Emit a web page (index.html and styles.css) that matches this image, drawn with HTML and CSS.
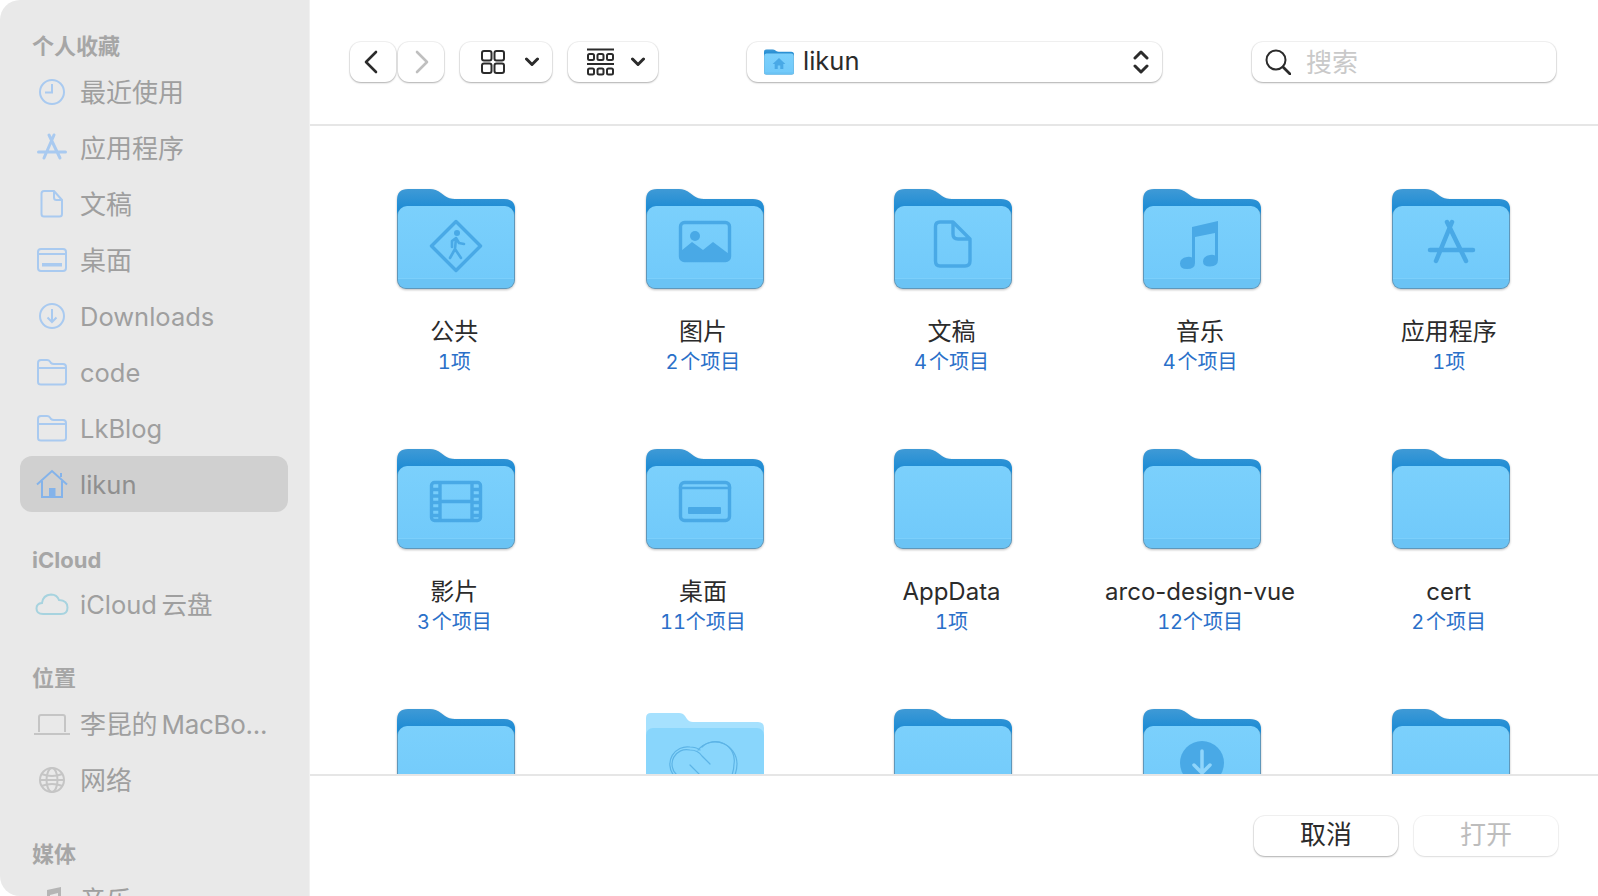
FILE: index.html
```html
<!DOCTYPE html>
<html lang="zh-CN">
<head>
  <meta charset="UTF-8">
  <title>打开</title>
  <link rel="stylesheet" href="styles.css">
</head>
<body>
  <!-- shared folder art -->
  <svg class="defs" aria-hidden="true">
    <defs>
      <linearGradient id="backGrad" x1="0" y1="0" x2="0" y2="1">
        <stop offset="0" stop-color="#3f9ad6"/>
        <stop offset="0.35" stop-color="#1c8bd4"/>
      </linearGradient>
      <linearGradient id="frontGrad" x1="0" y1="0" x2="0" y2="1">
        <stop offset="0" stop-color="#7bd0fc"/>
        <stop offset="1" stop-color="#70c9fa"/>
      </linearGradient>
      <symbol id="folder" viewBox="0 0 118 100">
        <path d="M0 11Q0 0 11 0H33Q39 0 44 4L48 7Q52 10 58 10H107Q118 10 118 20V60H0Z" fill="url(#backGrad)"/>
        <rect x="0" y="18" width="118" height="82" rx="9" fill="#5f97ba"/>
        <rect x="1" y="17" width="116" height="82" rx="9" fill="url(#frontGrad)"/>
        <path d="M1 89H117V90Q117 99 108 99H10Q1 99 1 90Z" fill="#6ac3f4"/>
        <rect x="1" y="89" width="116" height="1" fill="#7ccffb"/>
      </symbol>
      <symbol id="folder-light" viewBox="0 0 118 100">
        <path d="M0 9Q0 4 5 4H33Q37 4 39 7L41 10Q43 13 47 13H112Q118 13 118 19V60H0Z" fill="#a6e1fe"/>
        <rect x="0" y="19" width="118" height="81" rx="7" fill="#89d6fc"/>
      </symbol>
    </defs>
  </svg>

  <div class="dialog">
    <aside class="sidebar">
      <section class="side-group side-first">
        <h4>个人收藏</h4>
        <div class="side-row cjk"><svg class="side-icon" viewBox="0 0 36 36"><circle cx="18" cy="18" r="12"/><path d="M18 10V18.500H11"/></svg><span>最近使用</span></div>
        <div class="side-row cjk"><svg class="side-icon" viewBox="0 0 36 36"><path d="M15 5L26 28M20 5L10 28M4.500 22H31.500" stroke-width="3" stroke-linecap="round"/></svg><span>应用程序</span></div>
        <div class="side-row cjk"><svg class="side-icon" viewBox="0 0 36 36"><path d="M10 5H20L28 14V28Q28 30.500 25.500 30.500H10Q7.500 30.500 7.500 28V7.500Q7.500 5 10 5ZM20 5V11.500Q20 14 22.500 14H28"/></svg><span>文稿</span></div>
        <div class="side-row cjk"><svg class="side-icon" viewBox="0 0 36 36"><rect x="4" y="7" width="28" height="22" rx="3"/><path d="M4 12H32"/><rect class="solid" x="8" y="21" width="20" height="3.500"/></svg><span>桌面</span></div>
        <div class="side-row latin"><svg class="side-icon" viewBox="0 0 36 36"><circle cx="18" cy="18" r="12"/><path d="M18 11V24M13.500 19.500L18 24L22.500 19.500"/></svg><span>Downloads</span></div>
        <div class="side-row latin"><svg class="side-icon" viewBox="0 0 36 36"><path d="M4 28V9Q4 6 7 6H13Q15 6 16 7.500L17 9Q18 10 20 10H29Q32 10 32 13V28Q32 30.500 29 30.500H7Q4 30.500 4 28ZM4 14H32"/></svg><span>code</span></div>
        <div class="side-row latin"><svg class="side-icon" viewBox="0 0 36 36"><path d="M4 28V9Q4 6 7 6H13Q15 6 16 7.500L17 9Q18 10 20 10H29Q32 10 32 13V28Q32 30.500 29 30.500H7Q4 30.500 4 28ZM4 14H32"/></svg><span>LkBlog</span></div>
        <div class="side-row latin selected"><svg class="side-icon home" viewBox="0 0 36 36"><path d="M3 18.500L18 5L33 18.500M8 15V31H28V15M27 11V7"/><rect class="solid" x="15" y="22" width="6.500" height="9"/></svg><span>likun</span></div>
      </section>
      <section class="side-group side-cloud">
        <h4>iCloud</h4>
        <div class="side-row latin"><svg class="side-icon cloud" viewBox="0 0 36 36"><path d="M9 28Q2.500 28 2.500 22.500Q2.500 17.500 8 17Q9 9 17 8.500Q23 8.500 25 14Q33.500 14.500 33.500 21.500Q33.500 28 27 28Z"/></svg><span>iCloud&#8201;云盘</span></div>
      </section>
      <section class="side-group">
        <h4>位置</h4>
        <div class="side-row tight"><svg class="side-icon grey" viewBox="0 0 36 36"><path d="M5 26V11Q5 9 7 9H29Q31 9 31 11V26M0 28H36"/></svg><span>李昆的&#8201;MacBo...</span></div>
        <div class="side-row cjk"><svg class="side-icon grey" viewBox="0 0 36 36"><circle cx="18" cy="18" r="12"/><ellipse cx="18" cy="18" rx="5.500" ry="12"/><path d="M7.500 12Q18 16 28.500 12M7.500 24Q18 20 28.500 24M6 18H30"/></svg><span>网络</span></div>
      </section>
      <section class="side-group">
        <h4>媒体</h4>
        <div class="side-row cjk"><svg class="side-icon grey" viewBox="0 0 36 36"><path class="solid" d="M13 8L27 5V25H24V11L16 13V28H13Z"/></svg><span>音乐</span></div>
      </section>
    </aside>

    <main class="browser">
      <header class="toolbar">
        <div class="tool-btn nav-btn"><svg class="tool-icon" width="14" height="24" viewBox="0 0 14 24"><path d="M12 2L2 12L12 22"/></svg></div>
        <div class="tool-btn nav-btn nav-next"><svg class="tool-icon off" width="14" height="24" viewBox="0 0 14 24"><path d="M2 2L12 12L2 22"/></svg></div>
        <div class="tool-btn view-btn">
          <svg class="tool-icon thin" width="24" height="24" viewBox="0 0 24 24"><rect x="1" y="1" width="9.500" height="9.500" rx="2"/><rect x="13.500" y="1" width="9.500" height="9.500" rx="2"/><rect x="1" y="13.500" width="9.500" height="9.500" rx="2"/><rect x="13.500" y="13.500" width="9.500" height="9.500" rx="2"/></svg>
          <svg class="tool-icon bold" width="14" height="10" viewBox="0 0 14 10"><path d="M1.500 2L7 7.500L12.500 2"/></svg>
        </div>
        <div class="tool-btn group-btn">
          <svg class="tool-icon thin" width="27" height="28" viewBox="0 0 27 28"><path d="M0 1.500H27M0 16H27"/><rect x="1" y="6" width="6" height="6" rx="1.500"/><rect x="10.500" y="6" width="6" height="6" rx="1.500"/><rect x="20" y="6" width="6" height="6" rx="1.500"/><rect x="1" y="20.500" width="6" height="6" rx="1.500"/><rect x="10.500" y="20.500" width="6" height="6" rx="1.500"/><rect x="20" y="20.500" width="6" height="6" rx="1.500"/></svg>
          <svg class="tool-icon bold" width="14" height="10" viewBox="0 0 14 10"><path d="M1.500 2L7 7.500L12.500 2"/></svg>
        </div>
        <div class="tool-btn path-btn">
          <svg class="path-folder" width="30" height="28" viewBox="0 0 118 100"><use href="#folder"/><path class="glyph-fill" d="M59 34L84 58H76V78H64V64H54V78H42V58H34Z"/></svg>
          <span class="path-name">likun</span>
          <svg class="tool-icon bold" width="16" height="24" viewBox="0 0 16 24"><path d="M2 8L8 2L14 8M2 16L8 22L14 16"/></svg>
        </div>
        <div class="search-box">
          <svg class="tool-icon thin" width="26" height="26" viewBox="0 0 26 26"><circle cx="11" cy="11" r="9.500"/><path d="M18 18L25 25" stroke-width="2.800"/></svg>
          <span class="search-hint">搜索</span>
        </div>
      </header>

      <div class="files">
        <div class="file-grid">
          <div class="file">
            <svg class="folder" viewBox="0 0 118 100"><use href="#folder"/><path class="glyph" d="M59 32.500L83.500 57L59 81.500L34.500 57Z"/><circle class="glyph-fill" cx="60" cy="44" r="3"/><path class="glyph thin-glyph" d="M59 49L55 52V58M59 49L62 54L67 55M59 49L58 60L53 69M58 60L64 69"/></svg>
            <div class="file-name">公共</div><div class="file-meta">1项</div>
          </div>
          <div class="file">
            <svg class="folder" viewBox="0 0 118 100"><use href="#folder"/><rect class="glyph" x="34.500" y="33.500" width="49" height="38" rx="4"/><circle class="glyph-fill" cx="49" cy="47" r="5"/><path class="glyph-fill" d="M35 71V62L46 53L57 61L67 53L83 65V71Z"/></svg>
            <div class="file-name">图片</div><div class="file-meta">2&#8202;个项目</div>
          </div>
          <div class="file">
            <svg class="folder" viewBox="0 0 118 100"><use href="#folder"/><path class="glyph" d="M46 33H59L76 50V72Q76 77 71 77H46Q41.500 77 41.500 72V37.500Q41.500 33 46 33ZM59 33V45Q59 50 64 50H76"/></svg>
            <div class="file-name">文稿</div><div class="file-meta">4&#8202;个项目</div>
          </div>
          <div class="file">
            <svg class="folder" viewBox="0 0 118 100"><use href="#folder"/><path class="glyph-fill" d="M49 38L75 32V71Q75 77 67 77.500Q60 77.500 60 72.500Q60 67 67 66Q70 65.500 72 66.500V44L52 48V74Q52 80 44 80Q37 80 37 74.500Q37 69 44 68Q47 67.500 49 68.500Z"/></svg>
            <div class="file-name">音乐</div><div class="file-meta">4&#8202;个项目</div>
          </div>
          <div class="file">
            <svg class="folder" viewBox="0 0 118 100"><use href="#folder"/><path class="glyph round-glyph" d="M55 33L74 72M60 33L44 72M38 61H81"/></svg>
            <div class="file-name">应用程序</div><div class="file-meta">1项</div>
          </div>

          <div class="file">
            <svg class="folder" viewBox="0 0 118 100"><use href="#folder"/><rect class="glyph" x="34.500" y="33.500" width="49" height="38" rx="3"/><path class="glyph" d="M43 33V72M75 33V72M43 52.500H75M34 40.500H43M34 47H43M34 53.500H43M34 60H43M34 66.500H43M75 40.500H84M75 47H84M75 53.500H84M75 60H84M75 66.500H84"/></svg>
            <div class="file-name">影片</div><div class="file-meta">3&#8202;个项目</div>
          </div>
          <div class="file">
            <svg class="folder" viewBox="0 0 118 100"><use href="#folder"/><rect class="glyph" x="34.500" y="33.500" width="49" height="38" rx="4"/><path class="glyph thin-glyph" d="M34 39H84"/><rect class="glyph-fill" x="42" y="58" width="33" height="7" rx="1"/></svg>
            <div class="file-name">桌面</div><div class="file-meta">11个项目</div>
          </div>
          <div class="file">
            <svg class="folder" viewBox="0 0 118 100"><use href="#folder"/></svg>
            <div class="file-name">AppData</div><div class="file-meta">1项</div>
          </div>
          <div class="file">
            <svg class="folder" viewBox="0 0 118 100"><use href="#folder"/></svg>
            <div class="file-name">arco-design-vue</div><div class="file-meta">12个项目</div>
          </div>
          <div class="file">
            <svg class="folder" viewBox="0 0 118 100"><use href="#folder"/></svg>
            <div class="file-name">cert</div><div class="file-meta">2&#8202;个项目</div>
          </div>

          <div class="file">
            <svg class="folder" viewBox="0 0 118 100"><use href="#folder"/></svg>
          </div>
          <div class="file">
            <svg class="folder folder-flat" viewBox="0 0 118 100"><use href="#folder-light"/><path class="cc-line" d="M27.500 66A17.500 17.500 0 0 1 44 38Q50 38 54 41M52 41A22 22 0 0 1 91 55Q91 60 89 66"/><path class="cc-line" d="M31 66A14.500 14.500 0 0 1 44 41Q52 41 56 47L64 55M56 38A19 19 0 0 1 88 55Q88 60 86 66M44 56L54 66"/></svg>
          </div>
          <div class="file">
            <svg class="folder" viewBox="0 0 118 100"><use href="#folder"/></svg>
          </div>
          <div class="file">
            <svg class="folder" viewBox="0 0 118 100"><use href="#folder"/><circle class="glyph-fill" cx="59" cy="54" r="22"/><path class="arrow-line" d="M59 42V63M51 56L59 64L67 56"/></svg>
          </div>
          <div class="file">
            <svg class="folder" viewBox="0 0 118 100"><use href="#folder"/></svg>
          </div>
        </div>
      </div>

      <footer class="actions">
        <div class="action-btn">取消</div>
        <div class="action-btn disabled">打开</div>
      </footer>
    </main>
  </div>
</body>
</html>
```

FILE: styles.css
```css
html, body {
  margin: 0;
  height: 100%;
  overflow: hidden;
  background: #fff;
}
body {
  font-family: Inter, "Noto Sans CJK SC", sans-serif;
  color: #2b2b2b;
}
.defs {
  display: block;
  width: 0;
  height: 0;
}
.dialog {
  display: flex;
  height: 896px;
}

/* Sidebar */
.sidebar {
  width: 310px;
  flex-shrink: 0;
  box-sizing: border-box;
  height: 896px;
  overflow: hidden;
  padding: 0 21px 0 20px;
  background: #e9e9e9;
  border-radius: 20px 0 0 20px;
  border-right: 1px solid #f1f1f1;
}
.side-group {
  margin-top: 31px;
}
.side-cloud {
  margin-top: 33px;
}
.side-group h4 {
  margin: 0 0 3px 12px;
  font-size: 22px;
  line-height: 30px;
  font-weight: 700;
  color: #a6a6a6;
}
.side-cloud h4 {
  margin-bottom: 1px;
}
.side-row {
  display: flex;
  align-items: center;
  gap: 10px;
  height: 56px;
  padding-left: 14px;
  border-radius: 12px;
  font-size: 26px;
  color: #9f9f9f;
  white-space: nowrap;
}
.side-row.latin {
  font-size: 25.500px;
}
.side-row.tight {
  letter-spacing: -0.300px;
}
.side-row.cjk span, .side-row.tight span, .side-cloud .side-row span {
  padding-bottom: 3px;
}
.side-row.selected {
  background: #d0d0d0;
  color: #8f8f8f;
}
.side-icon {
  width: 36px;
  height: 36px;
  flex-shrink: 0;
  fill: none;
  stroke: #a9caf0;
  stroke-width: 2;
}
.side-icon .solid {
  fill: #a9caf0;
  stroke: none;
}
.side-icon.home {
  stroke: #84b3ea;
}
.side-icon.home .solid {
  fill: #84b3ea;
}
.side-icon.cloud {
  stroke: #a7d3df;
}
.side-icon.grey {
  stroke: #c5c5c5;
}
.side-icon.grey .solid {
  fill: #b5b5b5;
}

/* Right side */
.browser {
  flex: 1;
  min-width: 0;
  display: flex;
  flex-direction: column;
}
.toolbar {
  display: flex;
  align-items: center;
  flex-shrink: 0;
  box-sizing: border-box;
  height: 126px;
  padding: 0 42px 0 40px;
  border-bottom: 2px solid #e6e6e6;
}
.tool-btn, .search-box, .action-btn {
  box-sizing: border-box;
  height: 40px;
  background: #fff;
  border-radius: 11px;
  box-shadow: 0 1px 2px rgba(0,0,0,0.28), 0 0 0 1px rgba(0,0,0,0.05);
}
.tool-btn {
  display: flex;
  align-items: center;
  flex-shrink: 0;
}
.tool-icon {
  flex-shrink: 0;
  fill: none;
  stroke: #2b2b2b;
  stroke-width: 2.600;
  stroke-linecap: round;
  stroke-linejoin: round;
}
.tool-icon.off {
  stroke: #bfbfbf;
}
.tool-icon.thin {
  stroke-width: 2;
}
.tool-icon.bold {
  stroke-width: 3;
}
.nav-btn {
  width: 46px;
  justify-content: center;
  padding-right: 5px;
}
.nav-next {
  margin-left: 2px;
  padding-right: 0;
  padding-left: 2px;
}
.view-btn {
  width: 92px;
  margin-left: 16px;
  padding-left: 21px;
  gap: 20px;
}
.group-btn {
  width: 90px;
  margin-left: 16px;
  padding-left: 19px;
  gap: 17px;
}
.path-btn {
  width: 415px;
  margin-left: 89px;
  padding: 0 13px 0 17px;
}
.path-folder {
  flex-shrink: 0;
}
.path-name {
  flex: 1;
  margin-left: 9px;
  padding-bottom: 4px;
  font-size: 25.500px;
}
.search-box {
  display: flex;
  align-items: center;
  gap: 15px;
  flex: 1;
  margin-left: 90px;
  padding-left: 13px;
  font-size: 26px;
  color: #c9c9c9;
}
.search-hint {
  padding-bottom: 4px;
}

/* Folders */
.files {
  flex: 1;
  min-height: 0;
  overflow: hidden;
}
.file-grid {
  display: grid;
  grid-template-columns: repeat(5, 1fr);
  row-gap: 74px;
  padding: 63px 23px 0 22px;
}
.file {
  display: flex;
  flex-direction: column;
  align-items: center;
  text-align: center;
  min-height: 186px;
}
.folder {
  display: block;
  width: 118px;
  height: 100px;
  margin-bottom: 27px;
  flex-shrink: 0;
  filter: drop-shadow(0 1px 1px rgba(0,0,0,0.25));
}
.folder-flat {
  filter: none;
}
.glyph {
  fill: none;
  stroke: #49a9e6;
  stroke-width: 3.400;
  stroke-linejoin: round;
}
.thin-glyph {
  stroke-width: 2.600;
  stroke-linecap: round;
}
.round-glyph {
  stroke-width: 4.500;
  stroke-linecap: round;
}
.glyph-fill {
  fill: #49a9e6;
}
.arrow-line {
  fill: none;
  stroke: #8fd5fb;
  stroke-width: 3.500;
  stroke-linecap: round;
  stroke-linejoin: round;
}
.cc-line {
  fill: none;
  stroke: #5db4e6;
  stroke-width: 1.200;
  stroke-linecap: round;
}
.file-name {
  margin-bottom: 1px;
  padding-right: 4px;
  font-size: 24px;
  line-height: 32px;
  color: #2b2b2b;
  white-space: nowrap;
}
.file-meta {
  padding-right: 4px;
  font-size: 20px;
  line-height: 26px;
  color: #2a70c9;
  font-feature-settings: "tnum";
  white-space: nowrap;
}

/* Footer buttons */
.actions {
  display: flex;
  justify-content: flex-end;
  gap: 16px;
  flex-shrink: 0;
  box-sizing: border-box;
  height: 122px;
  padding: 40px 40px 0 0;
  border-top: 2px solid #e6e6e6;
}
.action-btn {
  width: 144px;
  line-height: 38px;
  text-align: center;
  font-size: 26px;
  color: #2b2b2b;
}
.action-btn.disabled {
  color: #bdbdbd;
  box-shadow: 0 1px 2px rgba(0,0,0,0.1), 0 0 0 1px rgba(0,0,0,0.04);
}
```
